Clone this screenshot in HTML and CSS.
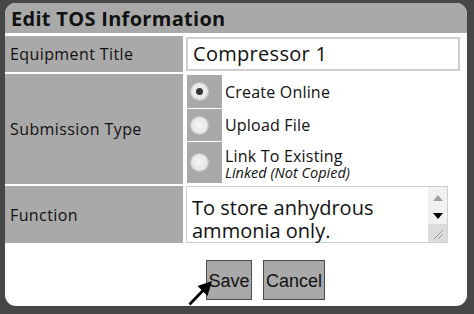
FILE: index.html
```html
<!DOCTYPE html>
<html>
<head>
<meta charset="utf-8">
<link rel="stylesheet" href="styles.css">
</head>
<body>
<div class="panel">
  <div class="header">Edit TOS Information</div>
  <div class="grid">
    <div class="label r1">Equipment Title</div>
    <div class="value r1">
      <div class="input">Compressor 1</div>
    </div>

    <div class="label r2">Submission Type</div>
    <div class="value r2 options">
      <div class="opt o1">
        <div class="radio-cell"><span class="radio checked"></span></div>
        <div class="opt-text">Create Online</div>
      </div>
      <div class="opt o2">
        <div class="radio-cell"><span class="radio"></span></div>
        <div class="opt-text">Upload File</div>
      </div>
      <div class="opt o3">
        <div class="radio-cell"><span class="radio"></span></div>
        <div class="opt-text">Link To Existing<span class="sub">Linked (Not Copied)</span></div>
      </div>
    </div>

    <div class="label r3">Function</div>
    <div class="value r3">
      <div class="textarea">
        <div class="ta-text">To store anhydrous<br>ammonia only.</div>
        <div class="scrollbar">
          <svg class="arrow up" width="10" height="6" viewBox="0 0 10 6"><polygon points="0,6 10,6 5,0" fill="#a0a0a0"/></svg>
          <svg class="arrow down" width="10" height="6" viewBox="0 0 10 6"><polygon points="0,0 10,0 5,6" fill="#000"/></svg>
          <div class="grip">
            <svg width="19" height="18" viewBox="0 0 19 18"><line x1="6" y1="15" x2="15" y2="6" stroke="#9a9a9a" stroke-width="1"/><line x1="10" y1="15" x2="15" y2="10" stroke="#9a9a9a" stroke-width="1"/></svg>
          </div>
        </div>
      </div>
    </div>
  </div>
  <div class="buttons">
    <div class="btn save">Save</div>
    <div class="btn cancel">Cancel</div>
  </div>
  <svg class="cursor" width="28" height="28" viewBox="0 0 28 28">
    <polygon points="25,1 20.5,16 16.5,12 3.5,25.5 1.5,23.5 14.5,10 10.5,6" fill="#000"/>
  </svg>
</div>
</body>
</html>
```
FILE: styles.css
```css
html, body {
  margin: 0;
  padding: 0;
}
body {
  width: 474px;
  height: 314px;
  background: #474747;
  overflow: hidden;
  font-family: "Open Sans", "Lato", sans-serif;
  color: #111;
}
.panel {
  position: relative;
  margin: 3px 0 0 5px;
  width: 462px;
  height: 303px;
  background: #fff;
  border-radius: 11px;
  overflow: hidden;
}
.header {
  height: 30px;
  background: #a9a9a9;
  font-weight: 700;
  font-size: 20px;
  letter-spacing: 0.3px;
  line-height: 31px;
  padding-left: 6px;
  color: #111;
}
.grid {
  margin-top: 3px;
  display: grid;
  grid-template-columns: 178px 1fr;
  grid-template-rows: 36px 110px 57px;
  column-gap: 3px;
  row-gap: 2px;
}
.label {
  background: #a9a9a9;
  font-size: 16px;
  letter-spacing: 0.4px;
  display: flex;
  align-items: center;
  padding-left: 5px;
}
.value {
  padding-right: 7px;
}
.input {
  margin-top: 1px;
  height: 30px;
  border: 2px solid #cfcfcf;
  font-size: 20px;
  letter-spacing: 0.3px;
  line-height: 30px;
  padding-left: 5px;
  background: #fff;
}
.options {
  display: flex;
  flex-direction: column;
  padding-top: 1px;
  gap: 1px;
}
.opt {
  display: flex;
  align-items: center;
}
.o1 { height: 33px; }
.o2 { height: 32px; }
.o3 { height: 41px; }
.radio-cell {
  margin-left: 1px;
  width: 35px;
  height: 100%;
  background: #a9a9a9;
  display: flex;
  align-items: center;
  justify-content: center;
}
.radio {
  width: 17px;
  height: 17px;
  border-radius: 50%;
  background: radial-gradient(circle at 50% 45%, #f6f6f6 0%, #e6e6e6 65%, #cdcdcd 100%);
  box-shadow: 0 0 0 1px #c4c4c4;
  position: relative;
  margin-right: 10px;
}
.radio.checked::after {
  content: "";
  position: absolute;
  left: 5px;
  top: 5px;
  width: 7px;
  height: 7px;
  border-radius: 50%;
  background: #333;
}
.opt-text {
  margin-left: 3px;
  font-size: 16px;
  letter-spacing: 0.2px;
  line-height: 18px;
}
.o3 .opt-text {
  padding-top: 2px;
}
.sub {
  display: block;
  font-style: italic;
  font-size: 14.5px;
  letter-spacing: 0;
  line-height: 16px;
}
.textarea {
  width: 260px;
  height: 55px;
  border: 1px solid #cfcfcf;
  display: flex;
  background: #fff;
}
.ta-text {
  flex: 1;
  font-size: 20px;
  line-height: 23px;
  padding: 9px 0 0 5px;
}
.scrollbar {
  width: 19px;
  background: #f1f1f1;
  display: flex;
  flex-direction: column;
  align-items: center;
}
.arrow.up { margin-top: 8px; }
.arrow.down { margin-top: 12px; }
.grip {
  margin-top: auto;
  width: 19px;
  height: 18px;
  background: #dcdcdc;
}
.grip svg { display: block; }
.buttons {
  display: flex;
  gap: 11px;
  margin: 17px 0 0 201px;
}
.btn {
  height: 38px;
  background: #a9a9a9;
  border: 1px solid #4a4a4a;
  font-family: "Liberation Sans", Arial, sans-serif;
  font-size: 18px;
  line-height: 40px;
  color: #111;
  text-align: center;
}
.save { width: 44px; }
.cancel { width: 60px; }
.cursor {
  position: absolute;
  left: 182px;
  top: 277px;
}
```
